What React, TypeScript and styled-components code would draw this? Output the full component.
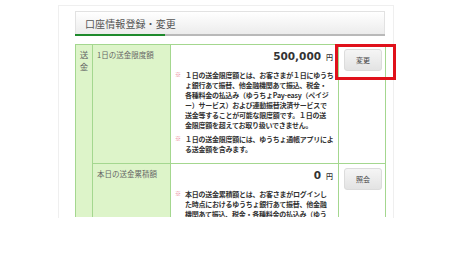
import styled, { createGlobalStyle } from "styled-components";

const GlobalStyle = createGlobalStyle`
  html, body {
    margin: 0;
    padding: 0;
    background: #ffffff;
  }
  body {
    font-family: "Noto Sans CJK JP", "Noto Sans", sans-serif;
  }
`;

type Note = string[];

interface RowData {
  label: string;
  amount: string;
  button: string;
  notes: Note[];
  highlight?: boolean;
}

const rows: RowData[] = [
  {
    label: "1日の送金限度額",
    amount: "500,000",
    button: "変更",
    highlight: true,
    notes: [
      [
        "１日の送金限度額とは、お客さまが１日にゆうち",
        "ょ銀行あて振替、他金融機関あて振込、税金・",
        "各種料金の払込み（ゆうちょPay-easy（ペイジ",
        "ー）サービス）および連動振替決済サービスで",
        "送金等することが可能な限度額です。１日の送",
        "金限度額を超えてお取り扱いできません。",
      ],
      ["１日の送金限度額には、ゆうちょ通帳アプリによ", "る送金額を含みます。"],
    ],
  },
  {
    label: "本日の送金累積額",
    amount: "0",
    button: "照会",
    notes: [
      [
        "本日の送金累積額とは、お客さまがログインし",
        "た時点におけるゆうちょ銀行あて振替、他金融",
        "機関あて振込、税金・各種料金の払込み（ゆう",
        "ちょPay-easy（ペイジー）サービス）および連",
      ],
    ],
  },
];

export default function App() {
  return (
    <Page>
      <GlobalStyle />
      <Card>
        <Header>
          <HeaderTitle>口座情報登録・変更</HeaderTitle>
        </Header>
        <TableClip>
          <Table>
            <colgroup>
              <col style={{ width: 17 }} />
              <col style={{ width: 78 }} />
              <col style={{ width: 168 }} />
              <col style={{ width: 47 }} />
            </colgroup>
            <tbody>
              {rows.map((row, i) => (
                <tr key={row.label}>
                  {i === 0 && (
                    <GroupCell rowSpan={rows.length}>
                      送<br />金
                    </GroupCell>
                  )}
                  <LabelCell>{row.label}</LabelCell>
                  <ValueCell>
                    <Amount>
                      {row.amount}
                      <Yen>円</Yen>
                    </Amount>
                    {row.notes.map((note, j) => (
                      <NoteItem key={j}>
                        <Mark>※</Mark>
                        <NoteText>
                          {note.map((line, k) => (
                            <span key={k}>
                              {line}
                              {k < note.length - 1 && <br />}
                            </span>
                          ))}
                        </NoteText>
                      </NoteItem>
                    ))}
                  </ValueCell>
                  <ActionCell>
                    <Button>{row.button}</Button>
                    {row.highlight && <Highlight />}
                  </ActionCell>
                </tr>
              ))}
            </tbody>
          </Table>
        </TableClip>
      </Card>
    </Page>
  );
}

const Page = styled.div`
  width: 474px;
  height: 266px;
  background: #ffffff;
  padding-top: 5px;
  box-sizing: border-box;
`;

const Card = styled.div`
  margin-left: 58px;
  width: 336px;
  height: 213px;
  box-sizing: border-box;
  border: 1px solid #efefef;
  border-bottom: none;
  padding: 5px 8px 0 16px;
`;

const Header = styled.div`
  height: 22px;
  display: flex;
  align-items: center;
  padding-left: 9px;
  background: linear-gradient(#ffffff, #ececec);
  border: 1px solid #e2e2e2;
  border-bottom: none;
  position: relative;
  box-shadow: 0 2px 0 #b9b9b9;

  &::after {
    content: "";
    position: absolute;
    left: -1px;
    bottom: -2px;
    width: 90px;
    height: 2px;
    background: #1e8a2c;
  }
`;

const HeaderTitle = styled.h2`
  margin: 0;
  font-size: 10px;
  font-weight: 400;
  color: #555;
  letter-spacing: 0.1px;
`;

const TableClip = styled.div`
  margin-top: 10px;
  height: 173px;
  overflow-y: clip;
  overflow-x: visible;
`;

const Table = styled.table`
  width: 310px;
  border-collapse: collapse;
  table-layout: fixed;

  td {
    border: 1px solid #a4d78f;
    vertical-align: top;
  }
`;

const GroupCell = styled.td`
  padding: 3px 0 0;
  background: #ddf4c9;
  text-align: center;
  font-size: 8.5px;
  line-height: 12px;
  color: #666;
`;

const LabelCell = styled.td`
  padding: 4px 0 0 4px;
  background: #ddf4c9;
  font-size: 7.5px;
  line-height: 11px;
  color: #666;
`;

const ValueCell = styled.td`
  padding: 5px 5px 9px 4px;
  background: #ffffff;
`;

const Amount = styled.div`
  text-align: right;
  font-family: "DejaVu Sans", sans-serif;
  font-weight: 700;
  font-size: 10.5px;
  line-height: 12px;
  color: #333;
`;

const Yen = styled.span`
  font-family: "Noto Sans CJK JP", sans-serif;
  font-size: 7px;
  font-weight: 500;
  margin-left: 5px;
`;

const NoteItem = styled.div`
  display: flex;
  margin-top: 7px;

  & + & {
    margin-top: 4px;
  }
`;

const Mark = styled.span`
  flex: none;
  width: 10px;
  font-size: 6px;
  line-height: 10px;
  color: #e8798a;
`;

const NoteText = styled.div`
  font-size: 7px;
  line-height: 10px;
  font-weight: 700;
  letter-spacing: -0.25px;
  color: #333;
  white-space: nowrap;
`;

const ActionCell = styled.td`
  padding: 4px 0 0 5px;
  position: relative;
  background: #ffffff;
`;

const Button = styled.button`
  display: block;
  width: 38px;
  height: 22px;
  padding: 0;
  border: 1px solid #dcdcdc;
  border-radius: 3px;
  background: linear-gradient(#f5f5f5, #e3e3e3);
  font-family: "Noto Sans CJK JP", sans-serif;
  font-size: 7px;
  color: #444;
`;

const Highlight = styled.div`
  position: absolute;
  left: -4px;
  top: -1px;
  width: 61px;
  height: 36px;
  box-sizing: border-box;
  border: 3px solid #e0111b;
  pointer-events: none;
`;
